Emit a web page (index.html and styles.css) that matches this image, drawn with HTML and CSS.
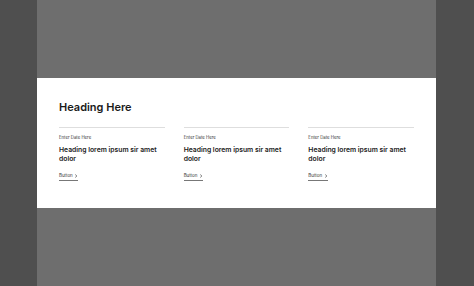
FILE: index.html
```html
<!DOCTYPE html>
<html lang="en">
<head>
    <meta charset="UTF-8">
    <meta name="viewport" content="width=device-width, initial-scale=1.0">
    <title>Heading Here</title>
    <link rel="stylesheet" href="styles.css">
</head>
<body>

    <div class="frame">
        <section class="panel">
            <h2 class="title">Heading Here</h2>

            <div class="cards">
                <div class="card">
                    <div class="date">Enter Date Here</div>
                    <h3 class="card-title">Heading lorem ipsum sir amet dolor</h3>
                    <a class="btn" href="#">Button
                        <svg viewBox="0 0 4 4" width="4" height="4"><polyline points="1.3,0.6 2.8,2 1.3,3.4" /></svg>
                    </a>
                </div>
                <div class="card">
                    <div class="date">Enter Date Here</div>
                    <h3 class="card-title">Heading lorem ipsum sir amet dolor</h3>
                    <a class="btn" href="#">Button
                        <svg viewBox="0 0 4 4" width="4" height="4"><polyline points="1.3,0.6 2.8,2 1.3,3.4" /></svg>
                    </a>
                </div>
                <div class="card">
                    <div class="date">Enter Date Here</div>
                    <h3 class="card-title">Heading lorem ipsum sir amet dolor</h3>
                    <a class="btn" href="#">Button
                        <svg viewBox="0 0 4 4" width="4" height="4"><polyline points="1.3,0.6 2.8,2 1.3,3.4" /></svg>
                    </a>
                </div>
            </div>
        </section>
    </div>

</body>
</html>
```

FILE: styles.css
```css
body {
    margin: 0;
    background-color: #4f4f4f;
    font-family: Inter, "Noto Sans", sans-serif;
    color: #1a1a1a;
}
.frame {
    width: 399px;
    height: 286px;
    margin-left: 37px;
    padding-top: 78px;
    box-sizing: border-box;
    background-color: #6e6e6e;
}
.panel {
    height: 130px;
    padding: 22px 22px 0;
    box-sizing: border-box;
    background-color: #fff;
}
.title {
    margin: 0;
    font-size: 11px;
    font-weight: 600;
    line-height: 14px;
}
.cards {
    display: grid;
    grid-template-columns: repeat(3, 1fr);
    column-gap: 19px;
    margin-top: 13px;
}
.card {
    border-top: 1px solid #dedede;
    padding-top: 7px;
}
.date {
    font-size: 4.3px;
    line-height: 6px;
    color: #333;
}
.card-title {
    margin: 4px 0 0;
    font-size: 6.8px;
    font-weight: 600;
    line-height: 9.3px;
}
.btn {
    display: flex;
    align-items: center;
    gap: 1.5px;
    width: max-content;
    margin-top: 9px;
    padding-bottom: 1px;
    font-size: 4.5px;
    line-height: 6px;
    color: #333;
    text-decoration: none;
    border-bottom: 1px solid #777;
}
.btn svg {
    fill: none;
    stroke: #333;
    stroke-width: 0.7;
}
```
